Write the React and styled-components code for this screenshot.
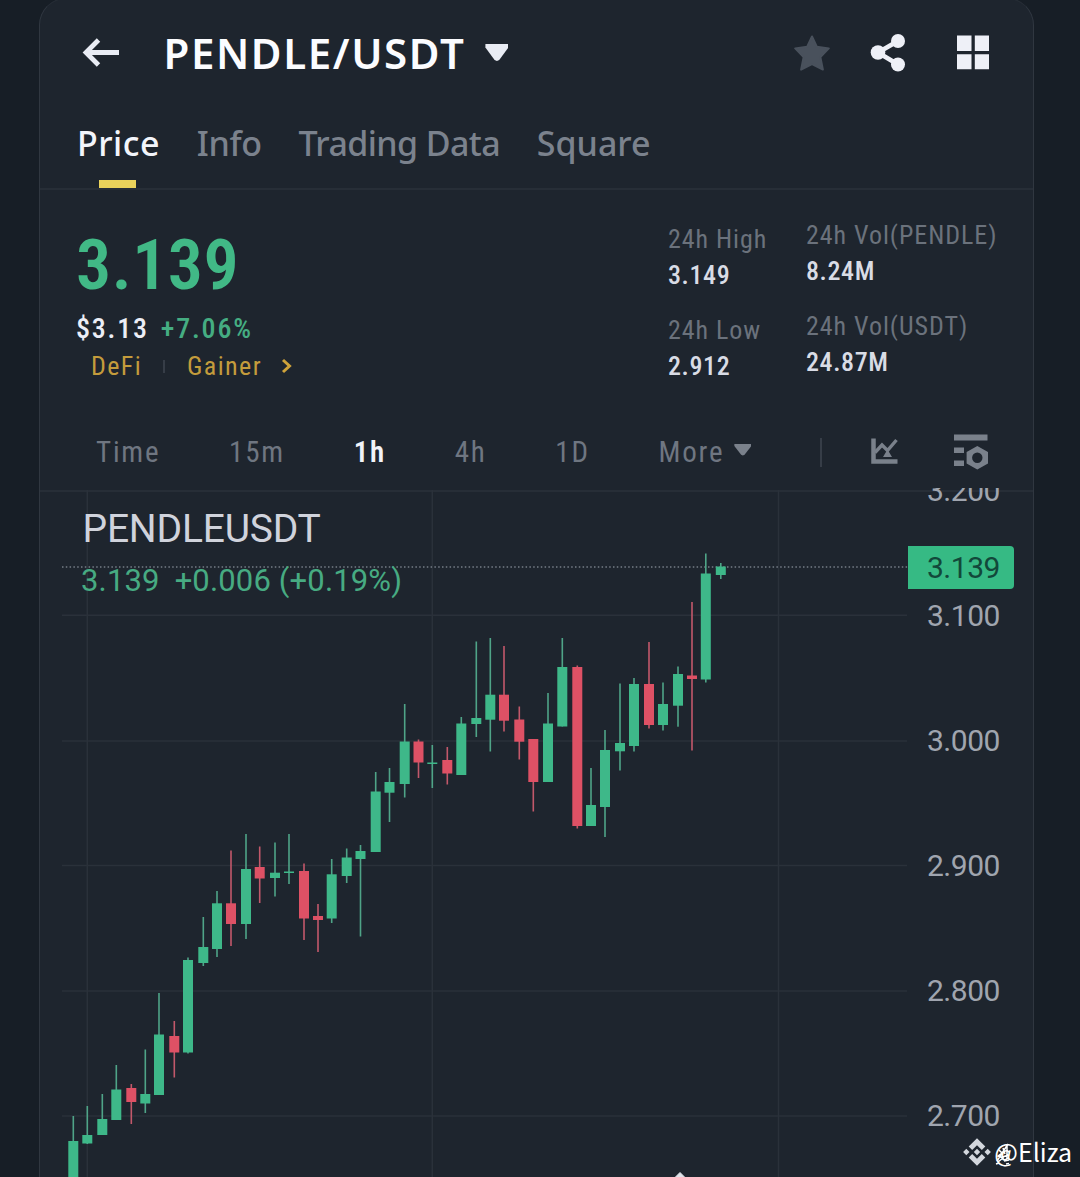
import React from 'react';
import { createGlobalStyle, styled } from 'styled-components';

const TABS = [
  { label: 'Price', track: 0.5, active: true },
  { label: 'Info', track: -0.3 },
  { label: 'Trading Data', track: -0.6 },
  { label: 'Square', track: 0 },
];

const INTERVALS = [
  { label: 'Time' },
  { label: '15m' },
  { label: '1h', active: true },
  { label: '4h' },
  { label: '1D' },
  { label: 'More', caret: true },
];

const PRICES = ['3.200', '3.100', '3.000', '2.900', '2.800', '2.700'];

// [x, wick top, body top, body bottom, wick bottom, is down]
const CANDLES = [
  [73.3, 1116, 1141, 1180, 1180],
  [87.3, 1106, 1135, 1143.5, 1144],
  [102.3, 1094, 1119, 1135, 1135],
  [116.3, 1065, 1089.5, 1120, 1120],
  [131.3, 1084, 1088, 1102, 1124, 1],
  [145.3, 1049.5, 1094, 1103.5, 1113],
  [159, 993, 1034.5, 1095, 1095],
  [174.3, 1021, 1036, 1052.5, 1077.5, 1],
  [188, 957.5, 960, 1052.5, 1053.5],
  [203.3, 917, 947, 963, 966],
  [217, 891, 903.3, 949, 957],
  [231, 850.5, 903.3, 924, 946, 1],
  [246, 834, 869, 924, 939],
  [259.7, 846.5, 867, 878.5, 903, 1],
  [275, 842.5, 872.7, 878, 896.5],
  [289, 834, 871.5, 873, 884],
  [304, 863.5, 871, 918.5, 940, 1],
  [318, 904, 916, 920, 952, 1],
  [331.7, 859, 874.3, 918.5, 923],
  [346.7, 848.5, 857.5, 876, 883],
  [360.5, 845, 851, 859, 936.5],
  [375.7, 772, 791.5, 852, 852],
  [389.5, 768, 782, 792.7, 822],
  [404.7, 704, 741.5, 784, 797.5],
  [418.5, 739.5, 741.5, 762.5, 778, 1],
  [432.3, 745, 762.5, 764, 788],
  [447.3, 747, 760, 773.5, 784.5, 1],
  [461.3, 717, 723.5, 775, 775],
  [476.3, 641.5, 718, 724, 737],
  [490.3, 638, 694.7, 719.7, 751.5],
  [504, 646, 694.7, 720.7, 731.5, 1],
  [519.3, 706.5, 719.5, 741.7, 759.5, 1],
  [533.3, 739, 739, 782, 811.5, 1],
  [548, 693, 723.5, 782, 782],
  [562.3, 638, 667, 726.5, 726.5],
  [577.3, 665.5, 667, 826, 828.5, 1],
  [591, 768, 805, 826, 826],
  [605, 730, 750, 807, 837],
  [620, 683.5, 743, 751.3, 770.5],
  [634, 678, 684, 746, 751.5],
  [649, 642, 684, 725, 728.5, 1],
  [663, 682.5, 704, 725, 730.5],
  [678, 666.5, 674, 705.7, 726.7],
  [692, 602, 675.5, 679, 750.5, 1],
  [705.8, 553.5, 573.5, 679.5, 682.5],
  [720.8, 563, 566.5, 575, 579],
];

const BackIcon = () => (
  <svg width="38" height="30" viewBox="0 0 38 30" fill="none" stroke="#e9ecf4" strokeWidth="4.8">
    <path d="M37 14.500H4M16.500 2 4 14.500l12.500 12.500" />
  </svg>
);

const StarIcon = () => (
  <svg width="36" height="40" viewBox="0 0 36 40">
    <path
      d="M18 3.500l4.800 10.200 12 1.700-8.400 8.700 2.500 12.500L18 31 7.100 36.600l2.500-12.500L1.200 15.400l12-1.700z"
      fill="#49515c"
      stroke="#49515c"
      strokeWidth="2"
      strokeLinejoin="round"
    />
  </svg>
);

const ShareIcon = () => (
  <svg width="36" height="40" viewBox="0 0 36 40" fill="#eef0f7">
    <path d="M28 8 8 19.500l20 12" fill="none" stroke="#eef0f7" strokeWidth="4.600" />
    <circle cx="28" cy="8" r="7" />
    <circle cx="8" cy="19.500" r="7.300" />
    <circle cx="28" cy="31.500" r="7" />
  </svg>
);

const GridIcon = () => (
  <svg width="34" height="36" viewBox="0 0 34 36" fill="#eef0f7">
    <path d="M1 .500h14.500V16H1zM18.800.500H33V16H18.800zM1 19.300h14.500v15H1zM18.800 19.300H33v15H18.800z" />
  </svg>
);

const IndicatorIcon = () => (
  <svg width="27" height="28" viewBox="0 0 27 28" fill="none" stroke="#7a818b">
    <path d="M2.500.500v23H26.500" strokeWidth="4.500" />
    <path d="M4 14.500 11 7l5.500 5.500L25.500 2" strokeWidth="3.400" />
    <path d="M16.500 11.500l4.500 7.500h-9z" fill="#7a818b" stroke="none" />
  </svg>
);

const SettingsIcon = () => (
  <svg width="36" height="36" viewBox="0 0 36 36" fill="#7a818b">
    <path d="M1 .500h33.500v6H1zM1 13.500h10v5.500H1zM1 26.500h10v5.500H1z" />
    <path
      fillRule="evenodd"
      d="M24.300 12 35 18v11.600l-10.700 6-10.700-6V18zM24.300 18.600a5.200 5.200 0 1 0 0 10.400 5.200 5.200 0 0 0 0-10.400z"
    />
  </svg>
);

const BinanceMark = () => (
  <svg width="28" height="28" viewBox="0 0 28 28" fill="#d3d7dd">
    <path d="M14 .200 22.300 8.500 18.800 12 14 7.200 9.200 12 5.700 8.500zM14 27.800 22.300 19.500 18.800 16 14 20.800 9.200 16 5.700 19.500z" />
    <path d="M14 10.800l3.200 3.200-3.200 3.200-3.200-3.200zM3.300 10.800l3.200 3.200-3.200 3.200L.1 14zM24.700 10.800l3.200 3.200-3.200 3.200-3.200-3.200z" />
  </svg>
);

const Scribble = () => (
  <svg width="22" height="24" viewBox="0 0 22 24" fill="none" stroke="#fff" strokeWidth="1.500">
    <path d="M3 20 14 3M5 9l3 3-4 3 5 2-5 4M9 7l2 6M13 4v14M8 16l7-2M10 20l5-1M2 23l3-1M12 23l3-.5" />
  </svg>
);

const CandleChart = () => (
  <svg width="868" height="689" viewBox="40 488 868 689">
    <g stroke="#2a313a" strokeWidth="1.500">
      {[615.3, 741, 865.5, 991, 1116].map((y) => (
        <line key={y} x1="62" x2="907" y1={y} y2={y} />
      ))}
      {[87.3, 432.3, 778.5].map((x) => (
        <line key={x} x1={x} x2={x} y1="490" y2="1177" />
      ))}
    </g>
    <line x1="62" x2="908" y1="567" y2="567" stroke="#767d87" strokeWidth="1.400" strokeDasharray="1.500 2.300" />
    {CANDLES.map(([x, high, top, bottom, low, down]) => (
      <g key={x} fill={down ? '#de5165' : '#3eb889'}>
        <rect x={x - 0.8} y={high} width="1.6" height={low - high} fill={down ? '#c2586a' : '#4fa487'} />
        <rect x={x - 5} y={top} width="10" height={bottom - top} />
      </g>
    ))}
    <path d="M680 1172.500l5 5h-10z" fill="#dfe2e9" stroke="#dfe2e9" />
  </svg>
);

const App = () => {
  return (
    <>
      <GlobalStyle />
      <Phone>
        <Header>
          <BackIcon />
          <Title>PENDLE/USDT</Title>
          <Caret $w={23} $h={17} $color="#e9ecf4" />
          <Actions>
            <StarIcon />
            <ShareIcon />
            <GridIcon />
          </Actions>
        </Header>
        <Tabs>
          {TABS.map((tab) => (
            <Tab key={tab.label} $active={tab.active} $track={tab.track}>
              {tab.label}
            </Tab>
          ))}
        </Tabs>
        <Summary>
          <div>
            <LastPrice>3.139</LastPrice>
            <Change>
              <b>$3.13</b>
              <span>+7.06%</span>
            </Change>
            <Tags>
              <span>DeFi</span>
              <TagDivider />
              <span>Gainer</span>
              <svg width="12" height="16" viewBox="0 0 12 16" fill="none" stroke="#cfa33a" strokeWidth="3">
                <path d="M2 2l6.500 6L2 14" />
              </svg>
            </Tags>
          </div>
          <StatColumn $width={138} $top={4}>
            <Stat>
              <dt>24h High</dt>
              <dd>3.149</dd>
            </Stat>
            <Stat>
              <dt>24h Low</dt>
              <dd>2.912</dd>
            </Stat>
          </StatColumn>
          <StatColumn $width={227} $top={0}>
            <Stat>
              <dt>24h Vol(PENDLE)</dt>
              <dd>8.24M</dd>
            </Stat>
            <Stat>
              <dt>24h Vol(USDT)</dt>
              <dd>24.87M</dd>
            </Stat>
          </StatColumn>
        </Summary>
        <Intervals>
          {INTERVALS.map((item) => (
            <Interval key={item.label} $active={item.active}>
              {item.label}
              {item.caret && <Caret $w={17} $h={12} $color="#7a818b" />}
            </Interval>
          ))}
          <Tools>
            <IndicatorIcon />
            <SettingsIcon />
          </Tools>
        </Intervals>
        <Chart>
          <CandleChart />
          <Axis>
            {PRICES.map((price) => (
              <AxisLabel key={price}>{price}</AxisLabel>
            ))}
          </Axis>
          <Legend>
            <Symbol>PENDLEUSDT</Symbol>
            <Quote>
              <span>3.139</span>
              <span>+0.006 (+0.19%)</span>
            </Quote>
          </Legend>
          <PriceTag>3.139</PriceTag>
        </Chart>
      </Phone>
      <Watermark>
        <BinanceMark />
        <Handle>
          @Eliza
          <Scribble />
        </Handle>
      </Watermark>
    </>
  );
};

export default App;

const GlobalStyle = createGlobalStyle`
  body {
    margin: 0;
    background-color: #171e26;
    overflow: hidden;
  }

  svg {
    display: block;
    flex: none;
  }
`;

const Phone = styled.div`
  box-sizing: border-box;
  width: 995px;
  height: 1179px;
  margin: -2px 0 0 39px;
  border: 1px solid #303740;
  border-top-color: #262d36;
  border-bottom: none;
  border-radius: 27px 27px 0 0;
  background-color: #1e252e;
  overflow: hidden;
  font-family: Roboto, 'Noto Sans', sans-serif;
  white-space: nowrap;
`;

const Header = styled.header`
  display: flex;
  align-items: center;
  height: 107px;
  padding: 0 43px 0 42px;
`;

const Title = styled.h1`
  margin: 0 20px 0 43.5px;
  color: #fbfcff;
  font: 650 42px/60px 'Noto Sans', sans-serif;
  letter-spacing: 1.6px;
`;

const Caret = styled.i`
  width: ${({ $w }) => $w}px;
  height: ${({ $h }) => $h}px;
  background-color: ${({ $color }) => $color};
  clip-path: polygon(0 0, 100% 0, 100% 20%, 60% 94%, 50% 100%, 40% 94%, 0 20%);
`;

const Actions = styled.div`
  display: flex;
  align-items: center;
  margin-left: auto;

  svg:nth-child(2) {
    margin: 0 50px 0 40px;
  }
`;

const Tabs = styled.nav`
  display: flex;
  gap: 36.7px;
  height: 81px;
  padding: 1px 37px 0;
  border-bottom: 2px solid #272e37;
`;

const Tab = styled.div`
  display: flex;
  flex-direction: column;
  align-items: center;
  color: ${({ $active }) => ($active ? '#f3f5fb' : '#7b828d')};
  font: 500 34px/72px 'Noto Sans', sans-serif;
  letter-spacing: ${({ $track }) => $track}px;

  &::after {
    content: '';
    width: 37px;
    height: 8px;
    margin: 1px 2px 0 0;
    background-color: ${({ $active }) => ($active ? '#ebd35b' : 'transparent')};
  }
`;

const Summary = styled.section`
  display: flex;
  height: 226px;
  padding-left: 36px;
  box-sizing: border-box;

  > div:first-child {
    flex: 1;
    padding-top: 36px;
  }
`;

const LastPrice = styled.div`
  color: #41b986;
  font-size: 70px;
  font-weight: 600;
  font-stretch: 75%;
  line-height: 78px;
  letter-spacing: 0.5px;
`;

const Change = styled.div`
  display: flex;
  gap: 12px;
  margin-top: 6px;
  color: #45ad82;
  font-size: 28px;
  font-weight: 500;
  font-stretch: 75%;
  line-height: 38px;
  letter-spacing: 1.8px;

  b {
    color: #eceef6;
    font-weight: 500;
  }
`;

const Tags = styled.div`
  display: flex;
  align-items: center;
  padding-left: 15px;
  color: #c49c3c;
  font-size: 26px;
  font-stretch: 75%;
  line-height: 36px;
  letter-spacing: 1.4px;

  svg {
    margin-left: 19px;
  }
`;

const TagDivider = styled.i`
  width: 2px;
  height: 13px;
  margin: 0 22px 0 21px;
  background-color: #363d47;
`;

const StatColumn = styled.div`
  display: flex;
  flex-direction: column;
  gap: 19px;
  width: ${({ $width }) => $width}px;
  padding-top: ${({ $top }) => $top + 27}px;
`;

const Stat = styled.dl`
  margin: 0;
  font-size: 26px;
  font-stretch: 75%;
  line-height: 36px;

  dt {
    color: #6b727c;
    letter-spacing: 0.95px;
  }

  dd {
    margin: 0;
    color: #d9dce5;
    font-weight: 500;
    letter-spacing: 0.6px;
  }
`;

const Intervals = styled.nav`
  display: flex;
  align-items: center;
  height: 72px;
  padding: 0 46px 0 56px;
`;

const Interval = styled.div`
  display: flex;
  align-items: center;
  margin-right: 68.7px;
  color: ${({ $active }) => ($active ? '#f1f3f9' : '#6f7681')};
  font-size: 29px;
  font-weight: ${({ $active }) => ($active ? 600 : 400)};
  font-stretch: 75%;
  line-height: 42px;
  letter-spacing: 1.8px;

  ${Caret} {
    margin: -5px 0 0 10px;
  }
`;

const Tools = styled.div`
  display: flex;
  align-items: center;
  margin-left: auto;

  &::before {
    content: '';
    width: 2px;
    height: 29px;
    margin-right: 49px;
    background-color: #363d47;
  }

  svg + svg {
    margin-left: 55px;
  }
`;

const Chart = styled.section`
  position: relative;
  display: flex;
  height: 690px;
  background: linear-gradient(#272e37, #272e37) 0 2px / 100% 2px no-repeat;
`;

const Axis = styled.div`
  flex: 1;
  overflow: hidden;
  padding-left: 19px;
`;

const AxisLabel = styled.div`
  height: 125px;
  color: #a0a5af;
  font-size: 30px;
  line-height: 125px;
  letter-spacing: -0.5px;

  &:first-child {
    margin-top: -60px;
  }
`;

const Legend = styled.div`
  position: absolute;
  top: 16px;
  left: 41px;
`;

const Symbol = styled.div`
  padding-left: 1.5px;
  color: #d0d3dc;
  font-size: 39px;
  line-height: 50px;
  letter-spacing: -0.2px;
`;

const Quote = styled.div`
  display: flex;
  gap: 15px;
  margin-top: 7px;
  color: #47ab82;
  font-size: 31px;
  line-height: 40px;
  letter-spacing: 0.15px;
`;

const PriceTag = styled.div`
  position: absolute;
  top: 58px;
  left: 868px;
  box-sizing: border-box;
  width: 106px;
  height: 43px;
  padding-left: 19px;
  border-radius: 0 4px 4px 0;
  background-color: #36ba84;
  color: #12483a;
  font-size: 30px;
  line-height: 43px;
  letter-spacing: -0.5px;
`;

const Watermark = styled.div`
  position: absolute;
  right: 8px;
  bottom: 8px;
  display: flex;
  align-items: center;
  gap: 3px;

  > svg {
    margin-top: 2px;
  }
`;

const Handle = styled.div`
  position: relative;
  color: #fff;
  font: 400 25px/36px 'Noto Sans CJK SC', sans-serif;

  svg {
    position: absolute;
    top: 8px;
    left: 0;
  }
`;
